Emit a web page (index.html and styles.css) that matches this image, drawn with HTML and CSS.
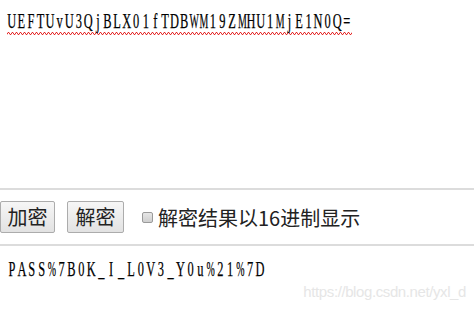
FILE: index.html
```html
<!DOCTYPE html>
<html>
<head>
<meta charset="utf-8">
<link rel="stylesheet" href="styles.css">
</head>
<body>
<div class="page">
  <div class="input"><span class="line typo"><span class="mono"><span>U</span><span>E</span><span>F</span><span>T</span><span>U</span><span>v</span><span>U</span><span>3</span><span>Q</span><span>j</span><span>B</span><span>L</span><span>X</span><span>0</span><span>1</span><span>f</span><span>T</span><span>D</span><span>B</span><span class="narrow">W</span><span class="narrow">M</span><span>1</span><span>9</span><span>Z</span><span class="narrow">M</span><span>H</span><span>U</span><span>1</span><span class="narrow">M</span><span>j</span><span>E</span><span>1</span><span>N</span><span>0</span><span>Q</span><span>=</span></span></span></div>
  <div class="controls">
    <button class="btn btn-first">加密</button>
    <button class="btn">解密</button>
    <label class="check"><span class="box"></span><span class="label">解密结果以16进制显示</span></label>
  </div>
  <div class="output"><span class="line result"><span class="mono wide"><span>P</span><span>A</span><span>S</span><span>S</span><span class="narrow">%</span><span>7</span><span>B</span><span>0</span><span>K</span><span>_</span><span>I</span><span>_</span><span>L</span><span>0</span><span>V</span><span>3</span><span>_</span><span>Y</span><span>0</span><span>u</span><span class="narrow">%</span><span>2</span><span>1</span><span class="narrow">%</span><span>7</span><span>D</span></span></span></div>
  <div class="watermark">https://blog.csdn.net/yxl_d</div>
</div>
</body>
</html>
```
FILE: styles.css
```css
html, body {
  margin: 0;
  padding: 0;
  background: #fff;
}
.page {
  position: relative;
  width: 474px;
  height: 312px;
  overflow: hidden;
}
.input {
  height: 178px;
  padding: 10px 0 0 7px;
  border-bottom: 2px solid #dcdcdc;
  box-sizing: content-box;
}
.line {
  display: block;
  height: 22px;
  overflow: visible;
}
.mono {
  display: flex;
  width: max-content;
  font-family: "Liberation Serif", serif;
  font-size: 20px;
  color: #000;
  -webkit-text-stroke: 0.25px #000;
  line-height: 22px;
  transform: scaleX(0.62);
  transform-origin: 0 0;
}
.mono > span {
  display: block;
  width: 15.45px;
  text-align: center;
  white-space: pre;
}
.mono > .narrow {
  transform: scaleX(0.8);
}
.typo {
  width: 345px;
  padding-bottom: 3px;
  background-image: url("data:image/svg+xml,%3Csvg xmlns='http://www.w3.org/2000/svg' width='4' height='3'%3E%3Cpath d='M0 2.5 L1 0.5 L2 0.5 L3 2.5 L4 2.5' fill='none' stroke='%23e52a2a' stroke-width='1'/%3E%3C/svg%3E");
  background-repeat: repeat-x;
  background-position: 0 100%;
}
.controls {
  height: 54px;
  display: flex;
  align-items: center;
  border-bottom: 2px solid #dcdcdc;
  box-sizing: content-box;
}
.btn {
  height: 32px;
  margin: 0 12px 0 0;
  padding: 0 6px;
  border: 1px solid #acacac;
  border-radius: 2px;
  background: linear-gradient(#f6f6f6, #e2e2e2);
  font-family: "Noto Sans CJK SC", sans-serif;
  font-size: 20px;
  line-height: 30px;
  color: #222;
}
.btn-first {
  width: 55px;
}
.btn + .btn {
  width: 57px;
}
.check {
  display: flex;
  align-items: center;
  margin-left: 6px;
}
.box {
  width: 9px;
  height: 9px;
  border: 1px solid #9a9a9a;
  border-radius: 2px;
  background: linear-gradient(#e6e6e6, #cfcfcf);
  margin-right: 5px;
}
.label {
  font-family: "Noto Sans CJK SC", sans-serif;
  font-size: 20px;
  color: #222;
}
.output {
  padding: 12px 0 0 7px;
}
.result {
  width: 258px;
}
.wide > span {
  width: 16px;
}
.watermark {
  position: absolute;
  right: 8px;
  bottom: 12px;
  font-family: "Liberation Sans", Arial, sans-serif;
  font-size: 15px;
  letter-spacing: -0.4px;
  color: #e6e6e6;
}
```
